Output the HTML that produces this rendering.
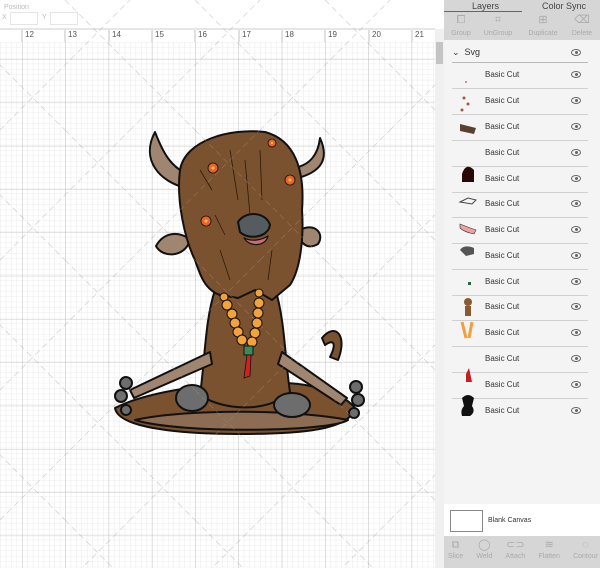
<!DOCTYPE html>
<html><head><meta charset="utf-8"><style>
body{margin:0;width:600px;height:568px;overflow:hidden;font-family:"Liberation Sans",sans-serif;background:#fff;position:relative}
.abs{position:absolute}
.row{position:absolute;left:452px;width:136px;height:26px;border-bottom:1px solid #cfcfcf;font-size:8px;color:#333}
.row span{position:absolute;left:33px;top:8px}
.eye{position:absolute;left:119px;top:9px;width:8px;height:5px;border:1px solid #666;border-radius:50%}
.eye:after{content:"";position:absolute;left:2.5px;top:1px;width:3px;height:3px;background:#666;border-radius:50%}
.tb{position:absolute;top:15px;font-size:7px;color:#aaa;text-align:center;width:34px;line-height:10px}
.tb b{font-size:11px;font-weight:normal;display:block;height:14px}
</style></head><body>
<div class="abs" style="left:4px;top:4px;font-size:7px;color:#bbb">Position</div>
<div class="abs" style="left:2px;top:14px;font-size:7px;color:#bbb">X</div>
<div class="abs" style="left:10px;top:12px;width:26px;height:11px;border:1px solid #e5e5e5"></div>
<div class="abs" style="left:42px;top:14px;font-size:7px;color:#bbb">Y</div>
<div class="abs" style="left:50px;top:12px;width:26px;height:11px;border:1px solid #e5e5e5"></div>
<svg class="abs" style="left:0;top:0" width="600" height="568">
<defs>
<pattern id="mn" x="22" y="42" width="5.41" height="5.41" patternUnits="userSpaceOnUse"><path d="M0 0V5.41M0 0H5.41" stroke="#dcdcdc" stroke-width="0.6" fill="none"/></pattern>
<pattern id="mj" x="22" y="16" width="43.3" height="43.3" patternUnits="userSpaceOnUse"><path d="M0 0V43.3M0 0H43.3" stroke="#b8b8b8" stroke-width="0.8" fill="none"/></pattern>
<pattern id="wm" x="0" y="0" width="130" height="130" patternUnits="userSpaceOnUse"><path d="M-65 0L65 130M65 0L195 130M0 130L130 0M-130 130L0 0M130 130L260 0" stroke="#999" stroke-width="0.7" stroke-dasharray="6 4" fill="none" opacity=".45"/></pattern>
</defs>
<rect x="0" y="42" width="435" height="526" fill="#fff"/>
<rect x="0" y="42" width="435" height="526" fill="url(#mn)"/>
<rect x="0" y="42" width="435" height="526" fill="url(#mj)"/>
<rect x="0" y="29" width="435" height="13" fill="#fff"/>
<line x1="0" y1="29" x2="435" y2="29" stroke="#ccc"/>
<g stroke="#999" stroke-width="0.6">
<line x1="22" y1="30" x2="22" y2="42"/><line x1="65" y1="30" x2="65" y2="42"/><line x1="109" y1="30" x2="109" y2="42"/><line x1="152" y1="30" x2="152" y2="42"/><line x1="195" y1="30" x2="195" y2="42"/><line x1="239" y1="30" x2="239" y2="42"/><line x1="282" y1="30" x2="282" y2="42"/><line x1="325" y1="30" x2="325" y2="42"/><line x1="369" y1="30" x2="369" y2="42"/><line x1="412" y1="30" x2="412" y2="42"/>
</g>
<g font-size="8" fill="#555" font-family="Liberation Sans">
<text x="25" y="37">12</text><text x="68" y="37">13</text><text x="112" y="37">14</text><text x="155" y="37">15</text><text x="198" y="37">16</text><text x="242" y="37">17</text><text x="285" y="37">18</text><text x="328" y="37">19</text><text x="372" y="37">20</text><text x="415" y="37">21</text>
</g>
<rect x="435" y="29" width="9" height="539" fill="#f0f0f0"/>
<rect x="436" y="42" width="7" height="22" fill="#c4c4c4"/>
<!-- yak -->
<g stroke="#111" stroke-width="2" stroke-linejoin="round">
<path d="M186 188 C160 182 140 160 155 132 C162 150 170 168 190 175Z" fill="#a08670"/>
<path d="M298 178 C320 172 330 160 320 138 C318 155 310 165 294 168Z" fill="#a08670"/>
<path d="M322 338 C335 322 348 335 338 360 L330 357 C336 345 335 338 325 345Z" fill="#7a5230"/>
<path d="M115 408 C140 395 200 382 250 385 C300 378 340 390 355 408 C350 430 300 434 240 434 C180 434 118 428 115 408Z" fill="#7a5230"/>
<path d="M135 420 C190 408 300 410 348 420 C330 432 180 434 135 420Z" fill="#8c6c52"/>
<path d="M215 290 C205 320 205 360 200 395 C225 412 270 412 290 392 C285 360 285 320 275 288Z" fill="#7a5230"/>
<ellipse cx="192" cy="398" rx="16" ry="13" fill="#6d6d6d"/>
<ellipse cx="292" cy="405" rx="18" ry="12" fill="#6d6d6d"/>
<path d="M210 352 L130 390 L134 398 L212 364Z" fill="#a08670"/>
<path d="M282 352 L347 398 L341 405 L278 364Z" fill="#a08670"/>
<ellipse cx="126" cy="383" rx="6" ry="6" fill="#6d6d6d"/><ellipse cx="121" cy="396" rx="6" ry="6" fill="#6d6d6d"/><ellipse cx="126" cy="410" rx="5" ry="5" fill="#6d6d6d"/>
<ellipse cx="356" cy="387" rx="6" ry="6" fill="#6d6d6d"/><ellipse cx="358" cy="400" rx="6" ry="6" fill="#6d6d6d"/><ellipse cx="354" cy="413" rx="5" ry="5" fill="#6d6d6d"/>
<path d="M156 246 C165 230 182 232 190 240 C185 258 162 258 156 246Z" fill="#a08670"/>
<path d="M300 230 C315 222 325 234 318 244 C308 250 298 244 300 230Z" fill="#a08670"/>
<path d="M180 170 C185 140 230 128 265 132 C295 140 305 170 302 210 C304 240 300 270 290 285 L272 300 L255 290 L238 298 L220 295 C205 290 200 275 195 260 C185 240 176 200 180 170Z" fill="#7a5230"/>
<path d="M238 222 C246 210 266 212 270 225 C268 238 248 240 240 232Z" fill="#555c60"/>
<path d="M244 238 C252 242 262 240 268 236 C266 246 250 248 244 238Z" fill="#c96d70" stroke-width="1.2"/>
</g>
<g fill="none" stroke="#2a1a0e" stroke-width="0.8">
<path d="M200 170 L212 190 M230 150 L238 200 M245 160 L250 215 M260 150 L262 200 M220 250 L230 280 M272 250 L268 280 M215 215 L225 235"/>
</g>
<g fill="#f4a23c" stroke="#111" stroke-width="1">
<circle cx="224" cy="297" r="4"/><circle cx="227" cy="305" r="5"/><circle cx="232" cy="314" r="5"/><circle cx="235" cy="323" r="5"/><circle cx="238" cy="332" r="5"/><circle cx="242" cy="340" r="5"/>
<circle cx="259" cy="293" r="4"/><circle cx="259" cy="303" r="5"/><circle cx="258" cy="313" r="5"/><circle cx="257" cy="323" r="5"/><circle cx="255" cy="333" r="5"/><circle cx="252" cy="342" r="5"/>
</g>
<rect x="244" y="346" width="9" height="9" fill="#3a8a5a" stroke="#111"/>
<path d="M247 355 L244 378 L250 376 L251 355Z" fill="#d62020" stroke="#111" stroke-width="0.8"/>
<g fill="#e8642c" stroke="#111" stroke-width="0.8">
<circle cx="213" cy="168" r="5"/><circle cx="272" cy="143" r="4"/><circle cx="290" cy="180" r="5"/><circle cx="206" cy="221" r="5"/>
</g>
<g fill="#f4c040"><circle cx="213" cy="168" r="1.5"/><circle cx="272" cy="143" r="1.2"/><circle cx="290" cy="180" r="1.5"/><circle cx="206" cy="221" r="1.5"/></g>
<rect x="0" y="0" width="435" height="568" fill="url(#wm)"/>
</svg>
<!-- right panel -->
<div class="abs" style="left:444px;top:0;width:156px;height:568px;background:#f4f4f4"></div>
<div class="abs" style="left:444px;top:0;width:156px;height:40px;background:#d6d6d6"></div>
<div class="abs" style="left:444px;top:11px;width:78px;height:1px;background:#666"></div>
<div class="abs" style="left:472px;top:1px;font-size:9px;color:#444">Layers</div>
<div class="abs" style="left:542px;top:1px;font-size:9px;color:#444">Color Sync</div>
<div class="tb" style="left:444px"><b>⧠</b>Group</div>
<div class="tb" style="left:481px"><b>⌗</b>UnGroup</div>
<div class="tb" style="left:526px"><b>⊞</b>Duplicate</div>
<div class="tb" style="left:565px"><b>⌫</b>Delete</div>
<div class="abs" style="left:452px;top:47px;font-size:9px;color:#333">⌄ &nbsp;Svg</div>
<div class="eye abs" style="left:571px;top:49px"></div>
<div class="abs" style="left:452px;top:62px;width:136px;height:1px;background:#bbb"></div>
<div style="position:absolute;left:0;top:0">
<div class="row" style="top:62px"><span>Basic Cut</span><div class="eye"></div></div>
<div class="row" style="top:88px"><span>Basic Cut</span><div class="eye"></div></div>
<div class="row" style="top:114px"><span>Basic Cut</span><div class="eye"></div></div>
<div class="row" style="top:140px"><span>Basic Cut</span><div class="eye"></div></div>
<div class="row" style="top:166px"><span>Basic Cut</span><div class="eye"></div></div>
<div class="row" style="top:191px"><span>Basic Cut</span><div class="eye"></div></div>
<div class="row" style="top:217px"><span>Basic Cut</span><div class="eye"></div></div>
<div class="row" style="top:243px"><span>Basic Cut</span><div class="eye"></div></div>
<div class="row" style="top:269px"><span>Basic Cut</span><div class="eye"></div></div>
<div class="row" style="top:294px"><span>Basic Cut</span><div class="eye"></div></div>
<div class="row" style="top:320px"><span>Basic Cut</span><div class="eye"></div></div>
<div class="row" style="top:346px"><span>Basic Cut</span><div class="eye"></div></div>
<div class="row" style="top:372px"><span>Basic Cut</span><div class="eye"></div></div>
<div class="row" style="top:398px;border:none"><span>Basic Cut</span><div class="eye"></div></div>
</div>
<svg class="abs" style="left:456px;top:64px" width="24" height="360">
<circle cx="10" cy="18" r="1" fill="#b08060"/>
<circle cx="8" cy="34" r="1.5" fill="#a05a40"/><circle cx="12" cy="40" r="1.5" fill="#a05a40"/><circle cx="6" cy="46" r="1.5" fill="#a05a40"/>
<path d="M4 60l16 4-2 6-14-3z" fill="#5a4030"/>
<path d="M6 110 q4-12 12-4 v12 h-12z" fill="#2a0808"/>
<path d="M4 138 l8-4 l8 2 l-4 4z" fill="none" stroke="#444"/>
<path d="M4 160 q10 4 16 6 l-2 4 q-10-2-14-6z" fill="#f0a0a0" stroke="#333" stroke-width=".6"/>
<path d="M4 186 q4-6 14-2 v6 l-8 2z" fill="#555"/>
<rect x="12" y="218" width="3" height="3" fill="#2a6a40"/>
<circle cx="12" cy="238" r="4" fill="#8a5a30"/><rect x="9" y="242" width="6" height="10" fill="#8a5a30"/>
<path d="M6 258 l4 16 M16 258 l-3 16" stroke="#f0a040" stroke-width="3"/>
<path d="M10 310 l3 -6 l3 14 l-6 0z" fill="#c02020"/>
<path d="M6 334 q6-6 12 0 l-2 8 q4 6 -2 10 h-8 q-2-6 2-10z" fill="#111"/>
</svg>
<div class="abs" style="left:445px;top:424px;width:155px;height:80px;background:#f4f4f4"></div>
<div class="abs" style="left:444px;top:504px;width:156px;height:32px;background:#fff"></div>
<div class="abs" style="left:450px;top:510px;width:31px;height:20px;border:1px solid #888;background:#fff"></div>
<div class="abs" style="left:488px;top:517px;font-size:7px;color:#333">Blank Canvas</div>
<div class="abs" style="left:444px;top:536px;width:156px;height:32px;background:#d6d6d6"></div>
<div class="abs" style="left:448px;top:540px;font-size:7px;color:#aaa;width:150px;display:flex;justify-content:space-between;text-align:center;line-height:10px">
<div><span style="font-size:11px">⧉</span><br>Slice</div><div><span style="font-size:11px">◯</span><br>Weld</div><div><span style="font-size:11px">⊂⊃</span><br>Attach</div><div><span style="font-size:11px">≋</span><br>Flatten</div><div><span style="font-size:11px">◌</span><br>Contour</div></div>
</body></html>
